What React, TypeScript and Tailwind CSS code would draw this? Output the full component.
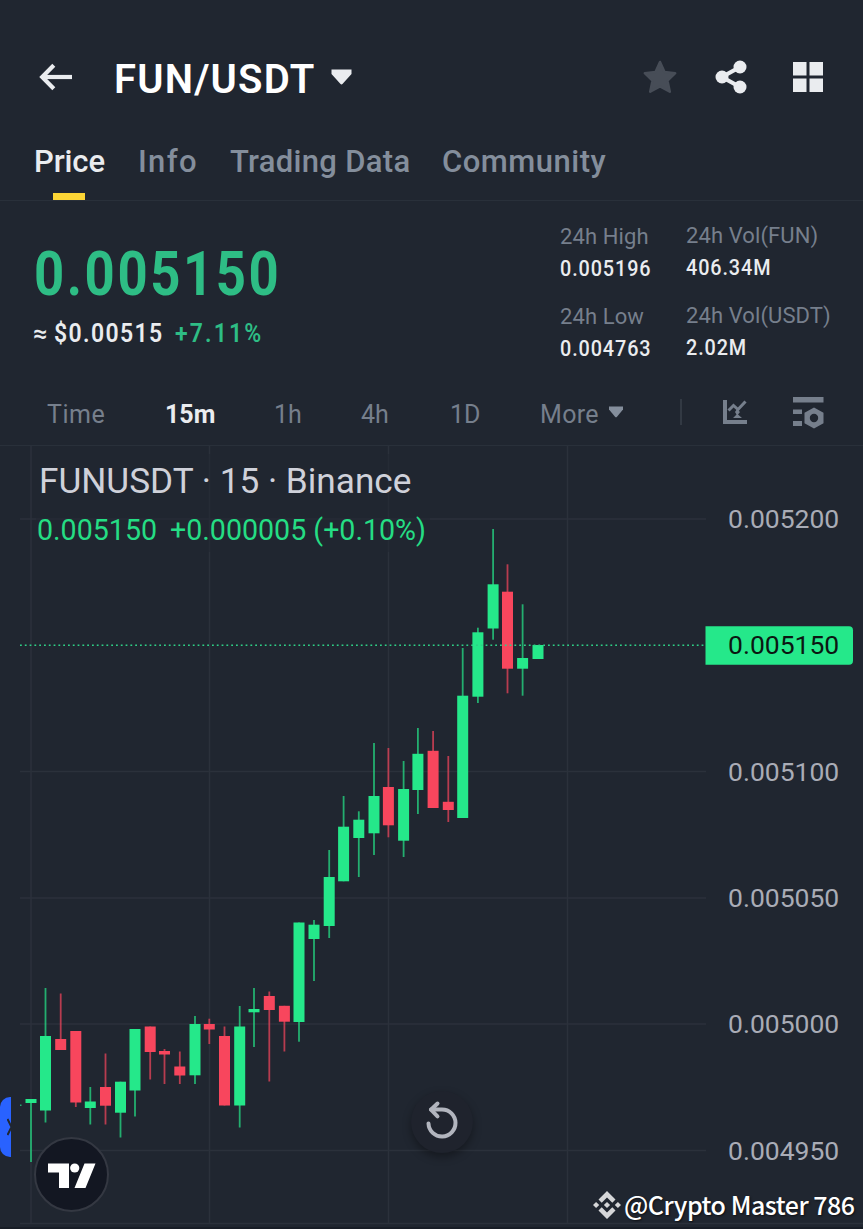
import type { ReactNode } from "react";

type Candle = {
  x: number;
  high: number;
  top: number;
  bottom: number;
  low: number;
  up?: boolean;
};

const UP = "#25e88a";
const DOWN = "#f8465d";

const candles: Candle[] = [
  { x: 31, high: 1099, top: 1099, bottom: 1103, low: 1162, up: true },
  { x: 45.5, high: 988, top: 1036, bottom: 1110.5, low: 1122.5, up: true },
  { x: 60.7, high: 993.5, top: 1039, bottom: 1050, low: 1050 },
  { x: 75.8, high: 1031, top: 1031, bottom: 1102.5, low: 1107 },
  { x: 90.3, high: 1087, top: 1101.5, bottom: 1108, low: 1124.5, up: true },
  { x: 105.5, high: 1053.5, top: 1087, bottom: 1105.7, low: 1124.5 },
  { x: 120.5, high: 1081.7, top: 1081.7, bottom: 1112.7, low: 1137.5, up: true },
  { x: 135, high: 1029, top: 1029, bottom: 1090.5, low: 1116.5, up: true },
  { x: 150.2, high: 1026.5, top: 1026.5, bottom: 1052, low: 1079.5 },
  { x: 164.5, high: 1049, top: 1051, bottom: 1054.5, low: 1084 },
  { x: 179.8, high: 1051.5, top: 1066.5, bottom: 1075.5, low: 1084 },
  { x: 195, high: 1016, top: 1024, bottom: 1075.3, low: 1084, up: true },
  { x: 209.3, high: 1018.7, top: 1024, bottom: 1029.5, low: 1044 },
  { x: 224.5, high: 1026.5, top: 1036, bottom: 1105.5, low: 1105.5 },
  { x: 239.7, high: 1006, top: 1026.5, bottom: 1105.5, low: 1127.5, up: true },
  { x: 254, high: 988, top: 1009, bottom: 1012.3, low: 1047, up: true },
  { x: 269.3, high: 991.5, top: 996, bottom: 1010, low: 1081.5 },
  { x: 284.4, high: 1005.8, top: 1005.8, bottom: 1021.7, low: 1051.5 },
  { x: 299, high: 922.5, top: 922.5, bottom: 1022, low: 1041.7, up: true },
  { x: 314, high: 920, top: 924.7, bottom: 939, low: 981, up: true },
  { x: 329.2, high: 850, top: 877, bottom: 926, low: 938, up: true },
  { x: 343.6, high: 796, top: 826.7, bottom: 881.3, low: 881.3, up: true },
  { x: 358.8, high: 811.3, top: 819.7, bottom: 838, low: 877, up: true },
  { x: 374, high: 743, top: 796, bottom: 833.3, low: 855, up: true },
  { x: 388.4, high: 748, top: 787, bottom: 825.3, low: 837.3 },
  { x: 403.6, high: 761, top: 789, bottom: 840.7, low: 857, up: true },
  { x: 417.9, high: 728, top: 753.8, bottom: 790, low: 814, up: true },
  { x: 433.1, high: 731, top: 750.8, bottom: 808, low: 808 },
  { x: 448.3, high: 756, top: 801.8, bottom: 810, low: 822 },
  { x: 462.7, high: 648, top: 695.7, bottom: 818, low: 818, up: true },
  { x: 477.9, high: 627.7, top: 632.3, bottom: 696.7, low: 703, up: true },
  { x: 493.1, high: 529, top: 584.3, bottom: 628.5, low: 639.7, up: true },
  { x: 507.5, high: 564.3, top: 591.7, bottom: 668.7, low: 693.3 },
  { x: 522.6, high: 604.3, top: 658, bottom: 668.7, low: 695.7, up: true },
  { x: 538, high: 645, top: 645, bottom: 659, low: 659, up: true },
];

const priceLevels = [
  { label: "0.005200", y: 519 },
  { label: "0.005100", y: 771.5 },
  { label: "0.005050", y: 898 },
  { label: "0.005000", y: 1024 },
  { label: "0.004950", y: 1150.5 },
];

const timeLines = [31, 209.5, 388.5, 567.5];

function Header() {
  return (
    <header className="mt-[47px] flex h-15 items-center pl-[39px]">
      <svg width="34" height="28" viewBox="0 0 34 28" fill="none" stroke="#eaecef" strokeWidth="4.2">
        <path d="M33 14H4" />
        <path d="M14.8 2.2 3.2 14l11.6 11.8" />
      </svg>
      <h1 className="mt-[5px] ml-[41px] w-[217px] whitespace-nowrap text-[40px] leading-[60px] font-semibold tracking-[1.2px] text-white">
        FUN/USDT
      </h1>
      <svg width="21" height="16" viewBox="0 0 21 16" fill="#eaecef">
        <path d="M.5.5h20V5l-8.800 9.800a1.600 1.600 0 0 1-2.400 0L.5 5z" />
      </svg>
      <svg className="ml-[291px]" width="34" height="34" viewBox="0 0 34 34">
        <path
          d="m17 2 4.500 9.900 10.700 1.300-7.700 7.500 2.300 11L17 26.500l-9.800 5.200 2.300-11-7.700-7.500 10.700-1.300z"
          fill="#474d57"
          stroke="#474d57"
          strokeWidth="2.500"
          strokeLinejoin="round"
        />
      </svg>
      <svg className="ml-[37px]" width="34" height="36" viewBox="0 0 34 36" fill="#eaecef">
        <path d="M26 8 8 18l18 10" fill="none" stroke="#eaecef" strokeWidth="4.200" />
        <circle cx="26" cy="8" r="6.500" />
        <circle cx="8" cy="18" r="6.500" />
        <circle cx="26" cy="28" r="6.500" />
      </svg>
      <svg className="ml-[45px]" width="30" height="30" viewBox="0 0 30 30" fill="#eaecef">
        <path d="M0 0h13.500v13.500H0zM16.500 0H30v13.500H16.500zM0 16.500h13.500V30H0zM16.500 16.500H30V30H16.500z" />
      </svg>
    </header>
  );
}

function Tabs() {
  return (
    <nav className="flex h-[94px] border-b border-[#29303a] pl-[34px] pt-[33px] text-[31px] leading-[44px] font-medium whitespace-nowrap text-[#848e9c]">
      <div className="flex w-[104px] flex-col text-[#eaecef]">
        <span className="tracking-[-0.1px]">Price</span>
        <span className="mt-[9px] ml-[19px] h-[7px] w-8 shrink-0 bg-[#fcd535]" />
      </div>
      <span className="w-[92px] tracking-[1.3px]">Info</span>
      <span className="w-[212px] tracking-[0.3px]">Trading Data</span>
      <span className="tracking-[0.5px]">Community</span>
    </nav>
  );
}

function Stat({ label, value }: { label: string; value: string }) {
  return (
    <div className="whitespace-nowrap">
      <div className="text-[22px] leading-8 tracking-[0.1px] text-[#767f8c]">{label}</div>
      <div className="origin-left scale-x-90 pt-px text-[22px] leading-[29px] font-medium tracking-[1px] text-[#eaecef]">
        {value}
      </div>
    </div>
  );
}

function Ticker() {
  return (
    <section className="flex h-[178px]">
      <div className="w-[560px] pl-[34px] pt-[37px] whitespace-nowrap">
        <div className="origin-left scale-x-[0.85] text-[62px] leading-[72px] font-bold tracking-[3px] text-[#2ebd85]">
          0.005150
        </div>
        <div className="mt-2 flex text-[25px] leading-8 font-semibold text-[#eaecef]">
          <span className="-ml-px w-[20px] tracking-[-1px]">≈</span>
          <span className="ml-px w-[121px] origin-left scale-x-[0.92] tracking-[1.500px]">$0.00515</span>
          <span className="origin-left scale-x-[0.92] font-semibold tracking-[2.300px] text-[#2ebd85]">+7.11%</span>
        </div>
      </div>
      <div className="w-[126px] space-y-[18px] pt-5">
        <Stat label="24h High" value="0.005196" />
        <Stat label="24h Low" value="0.004763" />
      </div>
      <div className="space-y-[18px] pt-[19px]">
        <Stat label="24h Vol(FUN)" value="406.34M" />
        <Stat label="24h Vol(USDT)" value="2.02M" />
      </div>
    </section>
  );
}

function Interval({ className, children }: { className: string; children: ReactNode }) {
  return <span className={`shrink-0 pt-[5px] ${className}`}>{children}</span>;
}

function Intervals() {
  return (
    <div className="flex h-[67px] items-center border-b border-[#29303a] pl-[47px] text-[25px] whitespace-nowrap text-[#767f8c]">
      <Interval className="w-[118px] tracking-[0.5px]">Time</Interval>
      <Interval className="w-[109px] font-bold text-[#eaecef]">15m</Interval>
      <Interval className="w-[87px]">1h</Interval>
      <Interval className="w-[89px]">4h</Interval>
      <Interval className="w-[90px]">1D</Interval>
      <Interval className="w-[69px] tracking-[0.3px]">More</Interval>
      <svg className="mb-px shrink-0" width="14" height="12" viewBox="0 0 14 12" fill="#848e9c">
        <path d="M0 .5h14v3L8 10.800a1.400 1.400 0 0 1-2 0L0 3.500z" />
      </svg>
      <span className="mb-px ml-[57px] h-[26px] w-0.5 shrink-0 bg-[#323943]" />
      <svg className="mb-px ml-[41px] shrink-0" width="25" height="26" viewBox="0 0 25 26" fill="#767f8c">
        <path d="M0 1h4v20h20v4H0z" />
        <path d="m5.500 11.500 5-5 4.500 4L22.500 2.500" fill="none" stroke="#767f8c" strokeWidth="3" />
        <path d="m14 10 3 3-2 2.500 4 3.500h-9l3.500-3.500-1.500-2.500z" />
      </svg>
      <svg className="mt-px ml-[45px] shrink-0" width="31" height="32" viewBox="0 0 31 32" fill="#767f8c">
        <path d="M0 0h30.500v5.500H0zM0 12.500h9V17H0zM0 24h9v5H0z" />
        <path fillRule="evenodd" d="m21 10.500 9.500 5.300v10.400L21 31.500l-9.500-5.300V15.800zm0 6.300a4.200 4.200 0 1 0 0 8.400 4.200 4.200 0 0 0 0-8.400z" />
      </svg>
    </div>
  );
}

function CandleChart() {
  return (
    <svg className="block" width="863" height="783" viewBox="0 446 863 783" fontFamily="Roboto, sans-serif">
      {/* Grid */}
      <g stroke="#2b313b" strokeWidth="1.500">
        {priceLevels.map((p) => (
          <line key={p.label} x1="20" x2="706" y1={p.y} y2={p.y} />
        ))}
        {timeLines.map((x) => (
          <line key={x} x1={x} x2={x} y1="446" y2="1223" />
        ))}
        <line x1="20" x2="863" y1="1223.500" y2="1223.500" />
      </g>
      <rect x="0" y="1227" width="863" height="2" fill="#181d26" />
      <rect x="36" y="454" width="394" height="98" fill="#202630" fillOpacity="0.5" />

      {/* Candles */}
      {candles.map((c) => (
        <g key={c.x} fill={c.up ? UP : DOWN}>
          <rect x={c.x - 0.9} y={c.high} width="1.800" height={c.low - c.high} fillOpacity="0.7" />
          <rect x={c.x - 5.5} y={c.top} width="11" height={c.bottom - c.top} />
        </g>
      ))}
      <rect x="20" y="1104.500" width="1.500" height="1.500" fill={UP} fillOpacity="0.700" />

      {/* Last price */}
      <line x1="20" x2="706" y1="645.300" y2="645.300" stroke="#2fcf86" strokeWidth="1.500" strokeDasharray="1.800 3" />
      <path d="M705.500 626.300H849a4 4 0 0 1 4 4v30.400a4 4 0 0 1-4 4H705.500z" fill={UP} />
      <text x="728" y="654.200" fontSize="26.500" fill="#0b1712">0.005150</text>

      {priceLevels.map((p) => (
        <text key={p.label} x="728" y={Math.ceil(p.y) + 9} fontSize="26.500" fill="#a9acb6">
          {p.label}
        </text>
      ))}
    </svg>
  );
}

function Chart() {
  return (
    <section className="relative h-[783px] overflow-hidden">
      <CandleChart />

      <div className="absolute top-3 left-[39px] whitespace-nowrap">
        <div className="text-[35.200px] leading-[46px] text-[#cfd1da]">FUNUSDT · 15 · Binance</div>
        <div className="-ml-0.5 mt-[9px] flex text-[28.600px] leading-[34px] text-[#25dd84]">
          <span className="w-[133px]">0.005150</span>
          <span>+0.000005 (+0.10%)</span>
        </div>
      </div>

      {/* Drawer handle */}
      <div className="absolute top-[651px] left-0 h-[60px] w-[11px] overflow-hidden rounded-l-[10px] bg-[#2962ff]">
        <svg className="ml-[7px] mt-[21px]" width="8" height="18" viewBox="0 0 8 18" fill="none" stroke="#202630" strokeWidth="2">
          <path d="m.5 1 4 8-4 8" />
        </svg>
      </div>

      {/* TradingView badge */}
      <div className="absolute top-[691px] left-[34px] flex size-[75px] items-center justify-center rounded-full border-2 border-[#343842] bg-[#131722]">
        <svg className="mt-0.5 ml-px" width="48" height="26" viewBox="0 0 48 26" fill="#fff">
          <path d="M0 .5h21V25H11V9.500H0zM36.500.5h11L37.500 25H26.500z" />
          <circle cx="26.700" cy="5" r="4.600" />
        </svg>
      </div>

      {/* Reset zoom */}
      <div className="absolute top-[645px] left-[411px] flex size-[62px] items-center justify-center rounded-full bg-[#1f232d] shadow-[0_4px_8px_rgba(0,0,0,0.35)]">
        <svg
          className="mb-1"
          width="34"
          height="40"
          viewBox="0 0 34 40"
          fill="none"
          stroke="#b2b5be"
          strokeWidth="4"
          strokeLinecap="round"
          strokeLinejoin="round"
        >
          <path d="M3.500 23.500A13.500 13.500 0 1 0 17 9.500H6" />
          <path d="M12.500 3.500 6 9.700l6.500 6.600" />
        </svg>
      </div>

      {/* Author mark */}
      <div className="absolute top-[739px] left-[593px] flex h-10 items-center whitespace-nowrap">
        <svg width="28" height="28" viewBox="0 0 28 28" fill="#d5d6d8">
          <path d="m14 0 8.500 8.500-3.200 3.200L14 6.400l-5.300 5.300-3.200-3.200zM14 28l-8.500-8.500 3.200-3.200 5.300 5.300 5.300-5.300 3.200 3.200zM3.100 10.900 6.200 14l-3.100 3.100L0 14zM24.900 10.900 28 14l-3.100 3.100-3.100-3.100zM14 10.900l3.100 3.100-3.100 3.100-3.100-3.100z" />
        </svg>
        <span className="mb-[3px] ml-[3px] font-['Noto_Sans_CJK_SC','Noto_Sans',sans-serif] text-[25px] leading-10 font-medium tracking-[-0.48px] text-white [text-shadow:1px_1px_2px_rgba(0,0,0,0.6)]">
          @Crypto Master 786
        </span>
      </div>
    </section>
  );
}

export default function App() {
  return (
    <main className="flex h-[1229px] w-[863px] flex-col overflow-hidden bg-[#202630] font-[Roboto,sans-serif]">
      <Header />
      <Tabs />
      <Ticker />
      <Intervals />
      <Chart />
    </main>
  );
}
